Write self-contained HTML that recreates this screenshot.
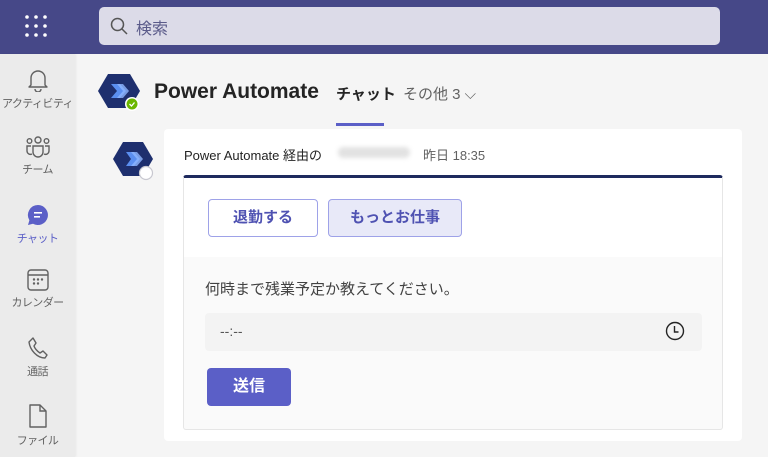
<!DOCTYPE html>
<html><head><meta charset="utf-8"><style>
*{margin:0;padding:0;box-sizing:border-box}
body{width:768px;height:457px;overflow:hidden;background:#f5f5f5;font-family:"Liberation Sans","Noto Sans CJK JP",sans-serif;position:relative}
.abs{position:absolute}
.top{left:0;top:0;width:768px;height:54px;background:#464888}
.search{left:99px;top:7px;width:621px;height:38px;background:#dcdbe8;border-radius:5px}
.side{left:0;top:54px;width:75px;height:403px;background:#ebebeb;box-shadow:1px 0 2px rgba(0,0,0,.06)}
.si{position:absolute;left:0;width:75px;text-align:center;font-size:11px;color:#616161;white-space:nowrap;letter-spacing:-0.6px}
.si svg{display:block;margin:0 auto 3px}
.card{left:164px;top:129px;width:578px;height:312px;background:#fff;border-radius:4px}
.ac{left:183px;top:175px;width:540px;height:255px;border:1px solid #e6e6e6;border-top:3px solid #1e2a5e;border-radius:3px;background:#fafafa;overflow:hidden}
.btn{position:absolute;top:21px;height:38px;border:1px solid #9ea2e8;border-radius:4px;color:#4f52b2;font-size:15px;font-weight:bold;text-align:center;line-height:36px}
</style></head><body>
<div class="abs top"></div>
<svg class="abs" style="left:24px;top:14px" width="24" height="24"><g fill="#fff"><circle cx="3" cy="3" r="1.8"/><circle cx="12" cy="3" r="1.8"/><circle cx="21" cy="3" r="1.8"/><circle cx="3" cy="12" r="1.8"/><circle cx="12" cy="12" r="1.8"/><circle cx="21" cy="12" r="1.8"/><circle cx="3" cy="21" r="1.8"/><circle cx="12" cy="21" r="1.8"/><circle cx="21" cy="21" r="1.8"/></g></svg>
<div class="abs search"></div>
<svg class="abs" style="left:110px;top:17px" width="18" height="18"><circle cx="7.5" cy="7.5" r="6" fill="none" stroke="#555" stroke-width="1.5"/><line x1="12" y1="12" x2="17" y2="17" stroke="#555" stroke-width="1.5"/></svg>
<div class="abs" style="left:136px;top:15px;font-size:16px;color:#5b5b8a">検索</div>

<div class="abs side">
 <div class="si" style="top:14px"><svg width="22" height="24" viewBox="0 0 22 24"><path d="M4 17V10a7 7 0 0 1 14 0v7l2 2H2z" fill="none" stroke="#616161" stroke-width="1.4" stroke-linejoin="round"/><path d="M8 21a3 3 0 0 0 6 0" fill="none" stroke="#616161" stroke-width="1.4"/></svg>アクティビティ</div>
 <div class="si" style="top:82px"><svg width="26" height="22" viewBox="0 0 26 22"><g fill="none" stroke="#616161" stroke-width="1.4"><circle cx="13" cy="4" r="3"/><circle cx="4.5" cy="5" r="2.3"/><circle cx="21.5" cy="5" r="2.3"/><path d="M8 10h10v6a5 5 0 0 1-10 0z"/><path d="M6 10H2v5a3.5 3.5 0 0 0 5 3"/><path d="M20 10h4v5a3.5 3.5 0 0 1-5 3"/></g></svg>チーム</div>
 <div class="si" style="top:149px;color:#5b5fc7"><svg width="24" height="24" viewBox="0 0 24 24"><path d="M12 2a10 10 0 1 1-5 18.7L2 22l1.4-4.8A10 10 0 0 1 12 2z" fill="#5b5fc7"/><rect x="8" y="9" width="8" height="1.6" fill="#fff"/><rect x="8" y="13" width="6" height="1.6" fill="#fff"/></svg>チャット</div>
 <div class="si" style="top:215px"><svg width="22" height="22" viewBox="0 0 22 22"><rect x="1" y="1" width="20" height="20" rx="3" fill="none" stroke="#616161" stroke-width="1.4"/><line x1="1" y1="6" x2="21" y2="6" stroke="#616161" stroke-width="1.4"/><g fill="#616161"><circle cx="7" cy="10.5" r="1.2"/><circle cx="11" cy="10.5" r="1.2"/><circle cx="15" cy="10.5" r="1.2"/><circle cx="7" cy="14.5" r="1.2"/><circle cx="11" cy="14.5" r="1.2"/></g></svg>カレンダー</div>
 <div class="si" style="top:282px"><svg width="22" height="24" viewBox="0 0 22 24"><path d="M6 2l3 5-2 3c1 3 3 5 6 7l3-2 4 4-2 3C10 22 3 14 2 6z" fill="none" stroke="#616161" stroke-width="1.4" stroke-linejoin="round"/></svg>通話</div>
 <div class="si" style="top:349px"><svg width="20" height="26" viewBox="0 0 20 26"><path d="M2 2h10l6 6v16H2z" fill="none" stroke="#616161" stroke-width="1.4" stroke-linejoin="round"/><path d="M12 2v6h6" fill="none" stroke="#616161" stroke-width="1.4"/></svg>ファイル</div>
</div>

<svg class="abs" style="left:98px;top:72px" width="44" height="40" viewBox="0 0 44 40"><polygon points="10,2 32,2 42,19 32,36 10,36 0,19" fill="#1e2f6e"/><polygon points="13,12 22,12 28,19 22,26 13,26 19,19" fill="#5b8ff0"/><polygon points="19,12 25,12 31,19 25,26 19,26 25,19" fill="#8fb6ff" opacity=".8"/><circle cx="34" cy="32" r="7" fill="#fff"/><circle cx="34" cy="32" r="5.5" fill="#6bb700"/><path d="M31.5 32l2 2 3-3.5" fill="none" stroke="#fff" stroke-width="1.3"/></svg>
<div class="abs" style="left:154px;top:80px;font-size:21px;font-weight:bold;color:#242424">Power Automate</div>
<div class="abs" style="left:336px;top:83px;font-size:15px;font-weight:bold;color:#242424">チャット</div>
<div class="abs" style="left:336px;top:123px;width:48px;height:3px;background:#5b5fc7"></div>
<div class="abs" style="left:403px;top:83px;font-size:15px;color:#616161">その他 3 ⌵</div>

<svg class="abs" style="left:113px;top:142px" width="42" height="40" viewBox="0 0 42 40"><polygon points="8,0 28,0 38,17 28,34 8,34 -2,17" transform="translate(2,0)" fill="#1e2f6e"/><polygon points="13,10 21,10 27,17 21,24 13,24 18,17" fill="#5b8ff0"/><polygon points="18,10 24,10 30,17 24,24 18,24 24,17" fill="#8fb6ff" opacity=".8"/><circle cx="33" cy="31" r="6.5" fill="#fff" stroke="#c8c8d0" stroke-width="1.2"/></svg>

<div class="abs card"></div>
<div class="abs" style="left:184px;top:145px;font-size:13px;color:#242424">Power Automate 経由の</div>
<div class="abs" style="left:338px;top:147px;width:72px;height:11px;background:#e2e2e2;border-radius:5px;filter:blur(2px)"></div>
<div class="abs" style="left:423px;top:145px;font-size:13px;color:#616161">昨日 18:35</div>

<div class="abs ac">
 <div style="position:absolute;left:0;top:0;width:100%;height:79px;background:#fff"></div>
 <div class="btn" style="left:24px;width:110px;background:#fff">退勤する</div>
 <div class="btn" style="left:144px;width:134px;background:#e8e9f8">もっとお仕事</div>
 <div style="position:absolute;left:21px;top:100px;font-size:15px;color:#424242">何時まで残業予定か教えてください。</div>
 <div style="position:absolute;left:21px;top:135px;width:497px;height:38px;background:#f3f3f3;border-radius:4px">
  <div style="position:absolute;left:15px;top:10px;font-size:14px;color:#555">--:--</div>
  <svg style="position:absolute;left:460px;top:8px" width="20" height="20"><circle cx="10" cy="10" r="8.5" fill="none" stroke="#242424" stroke-width="1.4"/><path d="M9.5 5v6h4" fill="none" stroke="#242424" stroke-width="1.4"/></svg>
 </div>
 <div style="position:absolute;left:23px;top:190px;width:84px;height:38px;background:#5b5fc7;border-radius:4px;color:#fff;font-size:16px;font-weight:bold;text-align:center;line-height:38px">送信</div>
</div>
</body></html>
